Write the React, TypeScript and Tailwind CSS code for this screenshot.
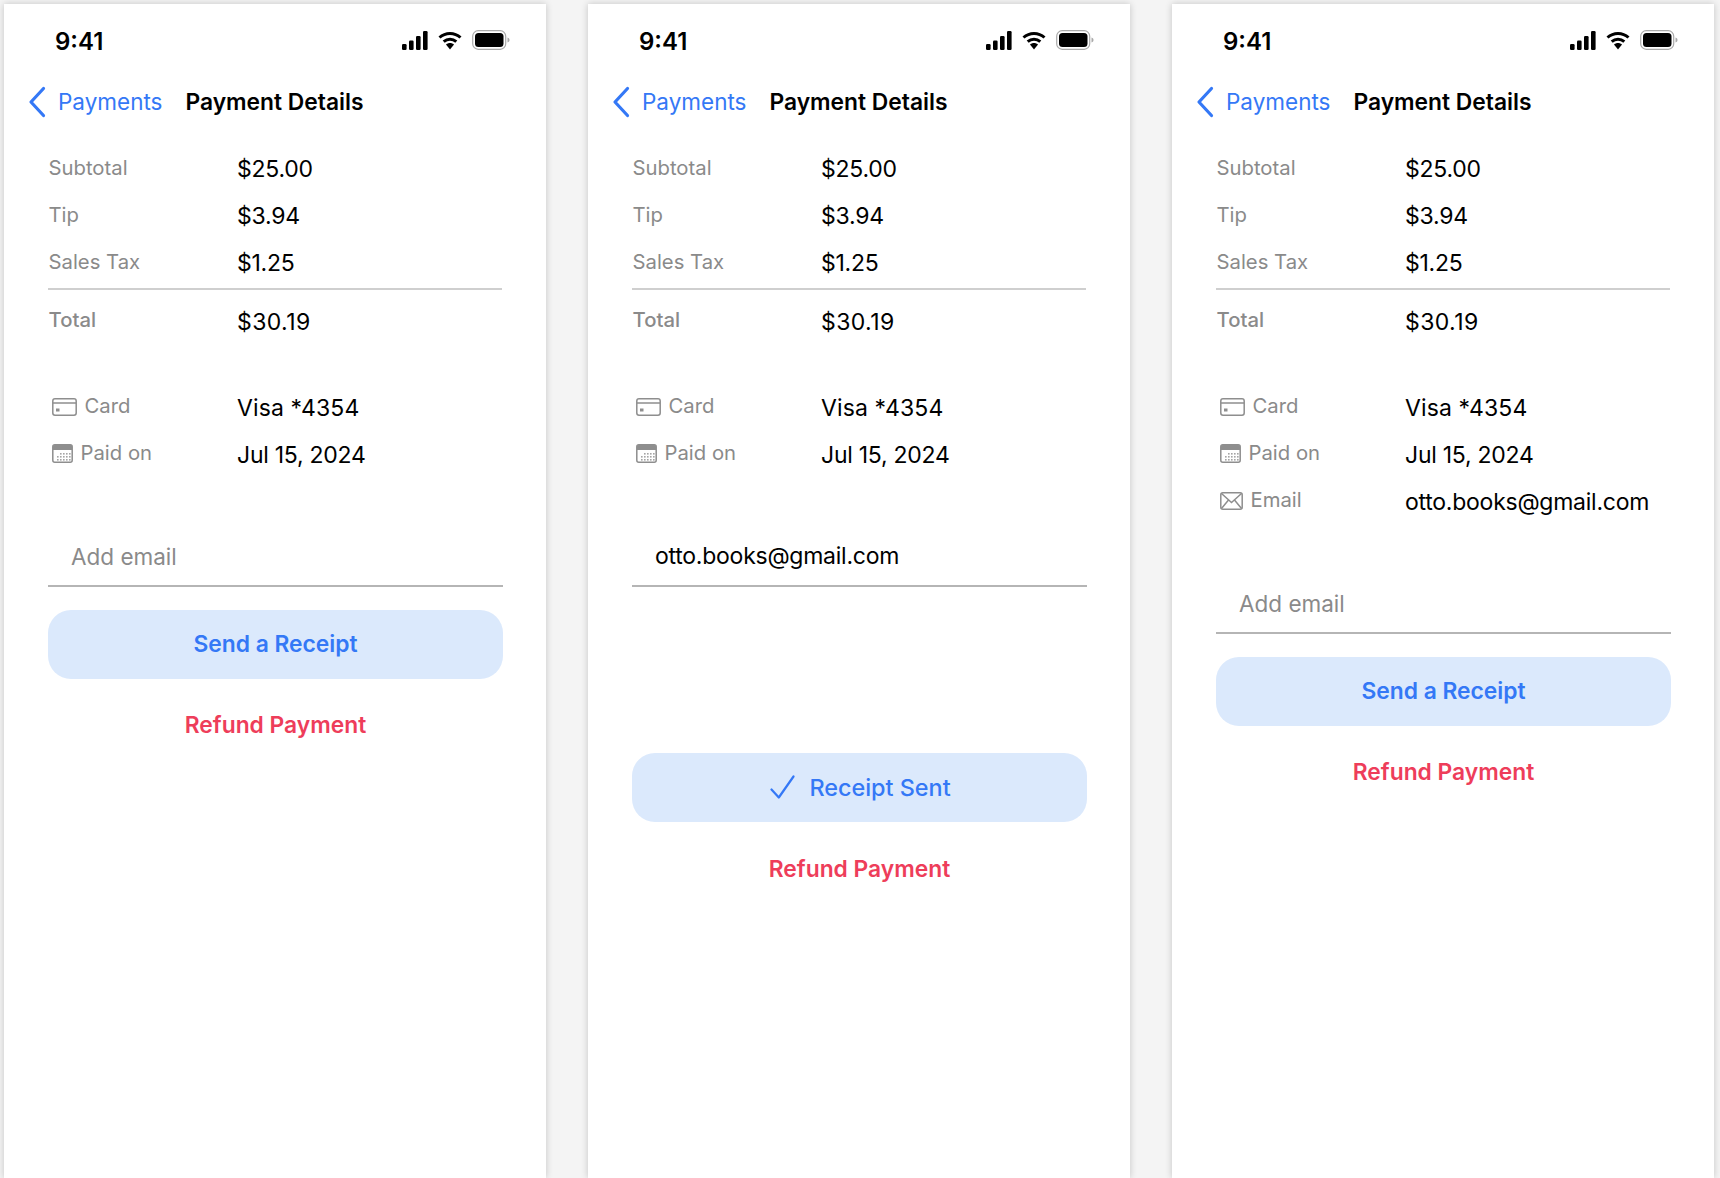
import React from "react";

function Signal() {
  return (
    <svg width="26" height="19" viewBox="0 0 26 19" className="block">
      <rect x="0" y="13" width="4.6" height="6" rx="1.2" fill="#000" />
      <rect x="7" y="9.5" width="4.6" height="9.5" rx="1.2" fill="#000" />
      <rect x="14" y="5" width="4.6" height="14" rx="1.2" fill="#000" />
      <rect x="21" y="0" width="4.6" height="19" rx="1.2" fill="#000" />
    </svg>
  );
}

function Wifi() {
  return (
    <svg width="24" height="19" viewBox="0 0 24 19" className="block">
      <path d="M1.5 6.5C7.5 1 16.5 1 22.5 6.5" fill="none" stroke="#000" strokeWidth="3" />
      <path d="M5.7 10.7C9.4 7.4 14.6 7.4 18.3 10.7" fill="none" stroke="#000" strokeWidth="3" />
      <path d="M8 13.6C10.4 11.6 13.6 11.6 16 13.6L12 18.5Z" fill="#000" />
    </svg>
  );
}

function Battery() {
  return (
    <svg width="38" height="20" viewBox="0 0 38 20" className="block">
      <rect x="0.7" y="0.7" width="33" height="18.6" rx="5.5" fill="none" stroke="#a9a9a9" strokeWidth="1.2" />
      <rect x="3" y="3" width="28.5" height="14" rx="3.5" fill="#000" />
      <path d="M35.5 7.5C37 8 37.5 9 37.5 10C37.5 11 37 12 35.5 12.5Z" fill="#a9a9a9" />
    </svg>
  );
}

function Chevron() {
  return (
    <svg width="18" height="32" viewBox="0 0 18 32" className="block">
      <path d="M15.5 2.5L3 16L15.5 29.5" fill="none" stroke="#3478f6" strokeWidth="3.2" strokeLinecap="round" strokeLinejoin="round" />
    </svg>
  );
}

function CardIcon() {
  return (
    <svg width="25" height="18" viewBox="0 0 25 18" className="block">
      <rect x="0.8" y="0.8" width="23.4" height="16.4" rx="2.2" fill="none" stroke="#8e8e8e" strokeWidth="1.5" />
      <path d="M1 5H24" stroke="#8e8e8e" strokeWidth="1.5" />
      <rect x="4" y="10.5" width="3.5" height="3" fill="#8e8e8e" />
    </svg>
  );
}

function CalendarIcon() {
  const dots: React.ReactNode[] = [];
  [9, 12, 15].forEach((y, r) => {
    [5, 8, 11, 14, 17].forEach((x, c) => {
      if (r === 0 && c === 0) return;
      dots.push(<rect key={`${r}-${c}`} x={x} y={y} width="1.6" height="1.6" fill="#a5a5a5" />);
    });
  });
  return (
    <svg width="21" height="19" viewBox="0 0 21 19" className="block">
      <rect x="0.8" y="0.8" width="19.4" height="17.4" rx="2" fill="none" stroke="#8e8e8e" strokeWidth="1.5" />
      <path d="M2.5 1H18.5A1.5 1.5 0 0 1 20 2.5V6H1V2.5A1.5 1.5 0 0 1 2.5 1Z" fill="#8e8e8e" />
      {dots}
    </svg>
  );
}

function MailIcon() {
  return (
    <svg width="23" height="18" viewBox="0 0 23 18" className="block">
      <rect x="0.8" y="0.8" width="21.4" height="16.4" rx="2" fill="none" stroke="#8e8e8e" strokeWidth="1.5" />
      <path d="M1.5 1.5L11.5 10.5L21.5 1.5M1.5 16.5L8.5 8M21.5 16.5L14.5 8" fill="none" stroke="#8e8e8e" strokeWidth="1.5" />
    </svg>
  );
}

function Check() {
  return (
    <svg width="25" height="25" viewBox="0 0 25 25" className="ml-[2px] block">
      <path d="M1.5 14.5L8.8 22.5L23.5 1.5" fill="none" stroke="#3478f6" strokeWidth="2.2" strokeLinecap="round" strokeLinejoin="round" />
    </svg>
  );
}

function Row({ label, value, icon, strong, spread }: { label: string; value: string; icon?: React.ReactNode; strong?: boolean; spread?: string }) {
  return (
    <div className="flex h-[47px] items-center">
      <div className={`-mt-[3px] flex w-[189px] items-center gap-[8px] pl-[0.5px] text-[20.3px] text-[#8a8a8a] ${strong ? "font-medium" : ""}`}>
        {icon && <span className="ml-[3px]">{icon}</span>}
        <span>{label}</span>
      </div>
      <div className={`text-[23px] text-black ${spread ?? "tracking-[-0.25px]"}`}>{value}</div>
    </div>
  );
}

function Phone({ variant }: { variant: "empty" | "typed" | "sent" }) {
  return (
    <div className="h-[1174px] w-[542px] shrink-0 bg-white shadow-[0_0_7px_rgba(0,0,0,0.2)]">
      <div className="flex h-[77px] items-center justify-between pb-[5px] pl-[51px] pr-[36px]">
        <span className="pt-[3px] text-[24px] font-semibold text-black">9:41</span>
        <div className="flex items-center gap-[10px]">
          <Signal />
          <Wifi />
          <Battery />
        </div>
      </div>
      <div className="flex h-[42px] items-center pl-[24px]">
        <Chevron />
        <span className="ml-[12px] text-[22.5px] text-[#3478f6]">Payments</span>
        <span className="ml-[23px] text-[22.8px] font-semibold text-black">Payment Details</span>
      </div>
      <div className="mt-[23px] px-[44px]">
        <Row label="Subtotal" value="$25.00" />
        <Row label="Tip" value="$3.94" />
        <Row label="Sales Tax" value="$1.25" />
        <div className="mt-[1px] h-[1.5px] w-[454px] bg-[#cfcfcf]" />
        <div className="mt-[9px]">
          <Row label="Total" value="$30.19" strong spread="tracking-[0.4px]" />
        </div>
        <div className="mt-[39px]">
          <Row label="Card" value="Visa *4354" icon={<CardIcon />} spread="tracking-[0.1px]" />
          <Row label="Paid on" value="Jul 15, 2024" icon={<CalendarIcon />} />
          {variant === "sent" && <Row label="Email" value="otto.books@gmail.com" icon={<MailIcon />} />}
        </div>
        <div className={`mt-[44px] flex h-[64px] w-[455px] items-center border-b-2 border-[#b5b5b5] pl-[23px] pt-[6px] ${variant === "typed" ? "text-[23px] tracking-[-0.25px] text-black" : "text-[22.5px] text-[#8a8a8a]"}`}>
          {variant === "typed" ? "otto.books@gmail.com" : "Add email"}
        </div>
        {variant === "typed" ? (
          <div className="mt-[166px] flex h-[69px] w-[455px] items-center justify-center gap-[14px] rounded-[23px] bg-[#dbe9fc] text-[23.4px] font-medium text-[#3478f6]">
            <Check />
            <span className="pt-[2px]">Receipt Sent</span>
          </div>
        ) : (
          <div className="mt-[23px] flex h-[69px] w-[455px] items-center justify-center rounded-[23px] bg-[#dbe9fc] text-[22.8px] font-semibold text-[#3478f6]">
            Send a Receipt
          </div>
        )}
        <div className={`w-[455px] text-center text-[22.8px] font-semibold text-[#ee3d5a] ${variant === "typed" ? "mt-[30px]" : "mt-[29px]"}`}>Refund Payment</div>
      </div>
    </div>
  );
}

export default function App() {
  return (
    <div className="flex h-[1178px] w-[1720px] gap-[42px] overflow-hidden bg-[#f4f4f4] pl-[4px] pt-[4px] font-['Inter',sans-serif]">
      <Phone variant="empty" />
      <Phone variant="typed" />
      <Phone variant="sent" />
    </div>
  );
}
